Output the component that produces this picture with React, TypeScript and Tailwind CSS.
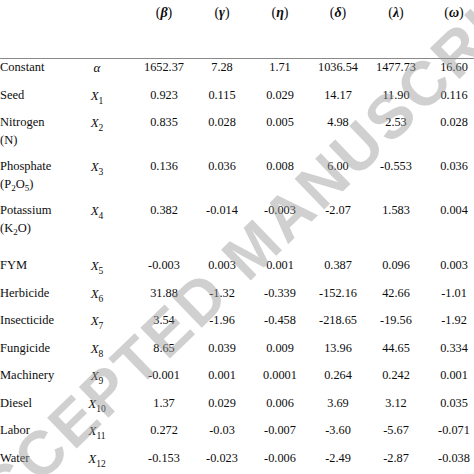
import React from "react";

type Row = {
  label: React.ReactNode;
  sym: React.ReactNode;
  vals: string[];
  h: string;
};

const X = ({ n }: { n: string }) => (
  <span className="whitespace-nowrap">
    <span className="italic text-[13px]">X</span>
    <span className="relative top-[4px] text-[9.5px]">{n}</span>
  </span>
);

const rows: Row[] = [
  { label: "Constant", sym: <span className="italic text-[13px]">α</span>, vals: ["1652.37", "7.28", "1.71", "1036.54", "1477.73", "16.60"], h: "h-[27.5px]" },
  { label: "Seed", sym: <X n="1" />, vals: ["0.923", "0.115", "0.029", "14.17", "11.90", "0.116"], h: "h-[27.5px]" },
  { label: <>Nitrogen<br />(N)</>, sym: <X n="2" />, vals: ["0.835", "0.028", "0.005", "4.98", "2.53", "0.028"], h: "h-[44px]" },
  {
    label: (
      <>
        Phosphate
        <br />
        (P<span className="relative top-[3px] text-[9px]">2</span>O<span className="relative top-[3px] text-[9px]">5</span>)
      </>
    ),
    sym: <X n="3" />,
    vals: ["0.136", "0.036", "0.008", "6.00", "-0.553", "0.036"],
    h: "h-[44px]",
  },
  {
    label: (
      <>
        Potassium
        <br />
        (K<span className="relative top-[3px] text-[9px]">2</span>O)
      </>
    ),
    sym: <X n="4" />,
    vals: ["0.382", "-0.014", "-0.003", "-2.07", "1.583", "0.004"],
    h: "h-[55px]",
  },
  { label: "FYM", sym: <X n="5" />, vals: ["-0.003", "0.003", "0.001", "0.387", "0.096", "0.003"], h: "h-[27.5px]" },
  { label: "Herbicide", sym: <X n="6" />, vals: ["31.88", "-1.32", "-0.339", "-152.16", "42.66", "-1.01"], h: "h-[27.5px]" },
  { label: "Insecticide", sym: <X n="7" />, vals: ["3.54", "-1.96", "-0.458", "-218.65", "-19.56", "-1.92"], h: "h-[27.5px]" },
  { label: "Fungicide", sym: <X n="8" />, vals: ["8.65", "0.039", "0.009", "13.96", "44.65", "0.334"], h: "h-[27.5px]" },
  { label: "Machinery", sym: <X n="9" />, vals: ["-0.001", "0.001", "0.0001", "0.264", "0.242", "0.001"], h: "h-[27.5px]" },
  { label: "Diesel", sym: <X n="10" />, vals: ["1.37", "0.029", "0.006", "3.69", "3.12", "0.035"], h: "h-[27.5px]" },
  { label: "Labor", sym: <X n="11" />, vals: ["0.272", "-0.03", "-0.007", "-3.60", "-5.67", "-0.071"], h: "h-[27.5px]" },
  { label: "Water", sym: <X n="12" />, vals: ["-0.153", "-0.023", "-0.006", "-2.49", "-2.87", "-0.038"], h: "h-[27.5px]" },
];

const heads = ["β", "γ", "η", "δ", "λ", "ω"];

const grid = "grid grid-cols-[59px_76px_58px_58px_58px_58px_58px_58px]";

export default function App() {
  return (
    <div
      className="relative w-[474px] h-[474px] overflow-hidden bg-white text-[#0d0d0d]"
      style={{ fontFamily: '"Liberation Serif", "Times New Roman", serif' }}
    >
      <div className="w-[483px]">
        <div className={`${grid} h-[59px] border-b border-[#8a8a8a] pt-[4px] text-[14px] leading-[18px]`}>
          <div />
          <div />
          {heads.map((g) => (
            <div key={g} className="text-center">
              (<span className="font-bold italic">{g}</span>)
            </div>
          ))}
        </div>
        {rows.map((r, i) => (
          <div key={i} className={`${grid} ${r.h} items-start text-[12.5px] leading-[17.5px]`}>
            <div className="whitespace-nowrap">{r.label}</div>
            <div className="text-center">{r.sym}</div>
            {r.vals.map((v, j) => (
              <div key={j} className="text-center text-[12.3px]">
                {v}
              </div>
            ))}
          </div>
        ))}
      </div>
      <div className="pointer-events-none absolute left-[254px] top-[248px] -translate-x-1/2 -translate-y-1/2 -rotate-[44deg] whitespace-nowrap">
        <span
          className="text-[62px] font-bold leading-none tracking-[3px] text-[rgba(150,150,150,0.45)]"
          style={{ fontFamily: '"Liberation Sans", Arial, sans-serif' }}
        >
          ACCEPTED MANUSCRIPT
        </span>
      </div>
    </div>
  );
}
